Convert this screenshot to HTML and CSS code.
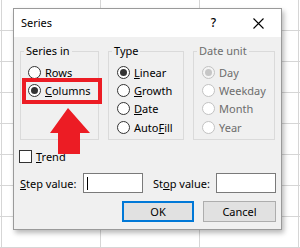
FILE: index.html
```html
<!DOCTYPE html>
<html>
<head>
<meta charset="utf-8">
<link rel="stylesheet" href="styles.css">
</head>
<body>
<div class="dialog">
  <div class="titlebar">
    <span class="title">Series</span>
    <span class="help">?</span>
    <svg class="close" width="11" height="11" viewBox="0 0 11 11"><path d="M0.5 0.5 L10.5 10.5 M10.5 0.5 L0.5 10.5" stroke="#000" stroke-width="1.1" fill="none"/></svg>
  </div>
  <div class="content">
    <div class="groups">
      <div class="group g-series">
        <span class="legend">Series in</span>
        <div class="opt"><span class="radio"></span><span><u>R</u>ows</span></div>
        <div class="opt"><span class="radio on"></span><span><u>C</u>olumns</span></div>
      </div>
      <div class="group g-type">
        <span class="legend">Type</span>
        <div class="opt"><span class="radio on"></span><span><u>L</u>inear</span></div>
        <div class="opt"><span class="radio"></span><span><u>G</u>rowth</span></div>
        <div class="opt"><span class="radio"></span><span><u>D</u>ate</span></div>
        <div class="opt"><span class="radio"></span><span>Auto<u>F</u>ill</span></div>
      </div>
      <div class="group g-date disabled">
        <span class="legend">Date unit</span>
        <div class="opt"><span class="radio on"></span><span>Day</span></div>
        <div class="opt"><span class="radio"></span><span>Weekday</span></div>
        <div class="opt"><span class="radio"></span><span>Month</span></div>
        <div class="opt"><span class="radio"></span><span>Year</span></div>
      </div>
    </div>
    <div class="trend-row"><span class="check"></span><span><u>T</u>rend</span></div>
    <div class="value-row">
      <span class="vlabel"><u>S</u>tep value:</span>
      <div class="input"><span class="caret"></span></div>
      <span class="vlabel stop">St<u>o</u>p value:</span>
      <div class="input"></div>
    </div>
    <div class="buttons">
      <div class="btn btn-ok">OK</div>
      <div class="btn btn-cancel">Cancel</div>
    </div>
  </div>
</div>
<div class="highlight"></div>
<svg class="arrow" width="44" height="50" viewBox="0 0 44 50">
  <polygon points="20,2 42,27 32,27 32,48 10,48 10,27 2,27" fill="#ec1c24"/>
</svg>
</body>
</html>
```
FILE: styles.css
```css
html, body {
  margin: 0;
  padding: 0;
}
body {
  width: 300px;
  height: 248px;
  overflow: hidden;
  position: relative;
  font-family: "Noto Sans", "Open Sans", sans-serif;
  font-size: 11px;
  color: #000;
  background-color: #fff;
  background-image:
    linear-gradient(to right, #d6d6d6 1px, transparent 1px),
    linear-gradient(to bottom, #d6d6d6 1px, transparent 1px);
  background-size: 99px 100%, 100% 31px;
  background-position: 1px 0, 0 30px;
}
.dialog {
  box-sizing: border-box;
  margin: 8px 0 0 13px;
  width: 269px;
  height: 222px;
  border: 1px solid #9a9a9a;
  background: #f0f0f0;
  box-shadow: 2px 3px 5px rgba(0, 0, 0, 0.28);
  display: flex;
  flex-direction: column;
}
.titlebar {
  height: 28px;
  background: #fff;
  display: flex;
  align-items: center;
  padding-left: 7px;
}
.title {
  font-size: 11px;
  line-height: 14px;
  flex: 1;
}
.help {
  font-size: 12px;
  line-height: 14px;
  margin-right: 37px;
  font-weight: 500;
}
.close {
  margin-right: 17px;
}
.content {
  flex: 1;
  display: flex;
  flex-direction: column;
  padding-top: 14px;
}
.groups {
  display: flex;
  gap: 9px;
  padding-left: 6px;
}
.group {
  position: relative;
  box-sizing: border-box;
  height: 89px;
  border: 1px solid #dadada;
  padding-top: 11px;
  padding-left: 8px;
}
.g-series { width: 79px; padding-left: 7px; }
.g-type { width: 76px; }
.g-date { width: 82px; }
.legend {
  position: absolute;
  top: -8px;
  left: 3px;
  padding: 0 2px;
  line-height: 14px;
  background: #f0f0f0;
}
.opt {
  height: 18.4px;
  display: flex;
  align-items: center;
  gap: 4px;
  white-space: nowrap;
}
.radio {
  box-sizing: border-box;
  width: 13px;
  height: 13px;
  border: 1px solid #333;
  border-radius: 50%;
  background: #fff;
  display: flex;
  align-items: center;
  justify-content: center;
  flex: none;
}
.radio.on::after {
  content: "";
  width: 7px;
  height: 7px;
  border-radius: 50%;
  background: #333;
}
.disabled {
  color: #6d6d6d;
}
.disabled .radio {
  border-color: #c2c2c2;
}
.disabled .radio.on {
  background: #f4f4f4;
}
.disabled .radio.on::after {
  background: #c6c6c6;
}
.trend-row {
  margin-top: 10px;
  height: 13px;
  padding-left: 5px;
  display: flex;
  align-items: center;
  gap: 4px;
  line-height: 13px;
}
.check {
  box-sizing: border-box;
  width: 13px;
  height: 13px;
  border: 1px solid #333;
  background: #fff;
}
.value-row {
  margin-top: 10px;
  height: 20px;
  padding-left: 6px;
  display: flex;
  align-items: center;
}
.vlabel {
  width: 63px;
  flex: none;
  white-space: nowrap;
}
.vlabel.stop {
  margin-left: 10px;
}
.input {
  box-sizing: border-box;
  width: 60px;
  height: 20px;
  border: 1px solid #7a7a7a;
  background: #fff;
  display: flex;
  align-items: center;
  padding-left: 3px;
}
.caret {
  width: 1px;
  height: 13px;
  background: #000;
}
.buttons {
  margin-top: 8px;
  display: flex;
  justify-content: flex-end;
  gap: 9px;
  padding-right: 5px;
}
.btn {
  box-sizing: border-box;
  height: 21px;
  background: #e1e1e1;
  border: 1px solid #adadad;
  display: flex;
  align-items: center;
  justify-content: center;
  line-height: 14px;
}
.btn-ok {
  width: 72px;
  border: 2px solid #0078d7;
}
.btn-cancel {
  width: 73px;
}
.highlight {
  position: absolute;
  left: 22px;
  top: 78px;
  width: 80px;
  height: 26px;
  box-sizing: border-box;
  border: 4px solid #ec1c24;
}
.arrow {
  position: absolute;
  left: 48px;
  top: 106px;
}
```
